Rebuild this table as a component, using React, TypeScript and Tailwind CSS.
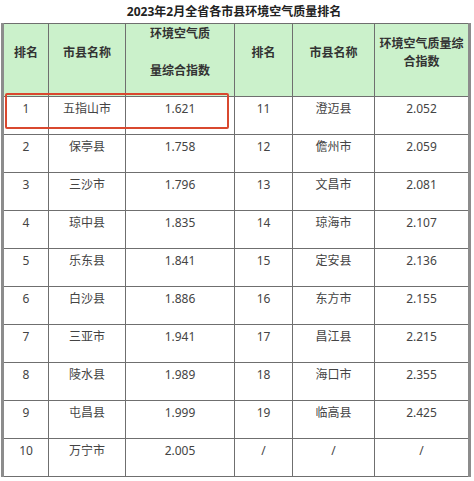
const rows: [string, string, string, string, string, string][] = [
  ["1", "五指山市", "1.621", "11", "澄迈县", "2.052"],
  ["2", "保亭县", "1.758", "12", "儋州市", "2.059"],
  ["3", "三沙市", "1.796", "13", "文昌市", "2.081"],
  ["4", "琼中县", "1.835", "14", "琼海市", "2.107"],
  ["5", "乐东县", "1.841", "15", "定安县", "2.136"],
  ["6", "白沙县", "1.886", "16", "东方市", "2.155"],
  ["7", "三亚市", "1.941", "17", "昌江县", "2.215"],
  ["8", "陵水县", "1.989", "18", "海口市", "2.355"],
  ["9", "屯昌县", "1.999", "19", "临高县", "2.425"],
  ["10", "万宁市", "2.005", "/", "/", "/"],
];

const font = { fontFamily: '"Noto Sans", "Noto Sans CJK SC", sans-serif' };

export default function App() {
  return (
    <div className="relative w-[474px] h-[481px] bg-white overflow-hidden" style={font}>
      <div className="h-[23px] flex items-center justify-center text-[12px] font-bold text-[#222] pr-[6px]">
        2023年2月全省各市县环境空气质量排名
      </div>
      <table className="table-fixed border-collapse w-[467px] ml-[1px] text-[12px] text-[#444]">
        <colgroup>
          <col className="w-[46px]" />
          <col className="w-[77px]" />
          <col className="w-[109px]" />
          <col className="w-[58px]" />
          <col className="w-[82px]" />
          <col className="w-[95px]" />
        </colgroup>
        <thead>
          <tr className="h-[73px] bg-[#cbf1cb] text-[#333]">
            <th className="border border-l-[3px] border-[#6f6f6f] border-l-[#8c8c8c] p-0 pb-[15px] font-bold leading-[16px]">排名</th>
            <th className="border border-[#6f6f6f] p-0 pb-[15px] font-bold leading-[16px]">市县名称</th>
            <th className="border border-[#6f6f6f] p-0 pb-[16px] font-bold leading-[16px]">
              <div className="flex flex-col items-center gap-[21px]">
                <span>环境空气质</span>
                <span>量综合指数</span>
              </div>
            </th>
            <th className="border border-[#6f6f6f] p-0 pb-[15px] font-bold leading-[16px]">排名</th>
            <th className="border border-[#6f6f6f] p-0 pb-[15px] font-bold leading-[16px]">市县名称</th>
            <th className="border border-r-[3px] border-[#6f6f6f] border-r-[#8c8c8c] p-0 pb-[15px] px-[4px] font-bold leading-[18px]">
              环境空气质量综合指数
            </th>
          </tr>
        </thead>
        <tbody>
          {rows.map((r, i) => (
            <tr key={i} className="h-[38px]">
              {r.map((c, j) => (
                <td
                  key={j}
                  className={
                    "border border-[#6f6f6f] align-top text-center pt-[4px] leading-[16px] " +
                    (j === 0 ? "border-l-[3px] border-l-[#8c8c8c]" : j === 5 ? "border-r-[3px] border-r-[#8c8c8c]" : "")
                  }
                >
                  {c}
                </td>
              ))}
            </tr>
          ))}
        </tbody>
      </table>
      <div className="absolute left-[5px] top-[93px] w-[224px] h-[36px] border-2 border-[#d9482f] rounded-[2px]" />
    </div>
  );
}
